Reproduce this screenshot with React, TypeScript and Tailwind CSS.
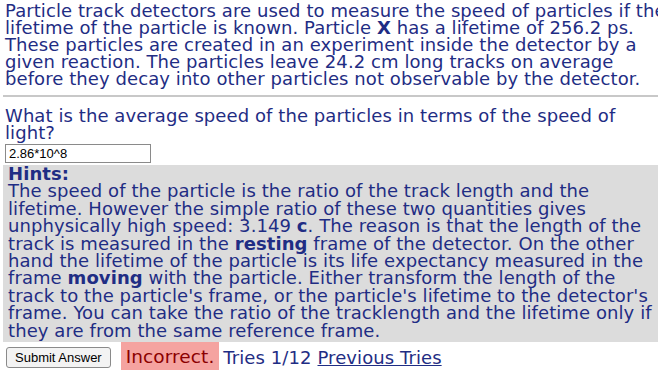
import React from "react";

export default function App() {
  const font = { fontFamily: '"DejaVu Sans", Verdana, sans-serif' };
  return (
    <div className="w-[658px] h-[370px] overflow-hidden bg-white text-[#1f2d84] tracking-[0.08px]" style={font}>
      <div className="w-[672px] pl-[3px]">
        <p className="text-[18px] leading-[17px] pl-[2px] pt-[2px]">
          Particle track detectors are used to measure the speed of particles if the lifetime of the particle is known. Particle <b>X</b> has a lifetime of 256.2 ps. These particles are created in an experiment inside the detector by a given reaction. The particles leave 24.2 cm long tracks on average before they decay into other particles not observable by the detector.
        </p>
        <hr className="mt-[8px] mb-[10px] border-t-2 border-[#c8c8c8]" />
        <p className="w-[640px] text-[18px] leading-[17px] pl-[2px]">
          What is the average speed of the particles in terms of the speed of light?
        </p>
        <div className="pl-[2px]">
          <input
            readOnly
            value="2.86*10^8"
            className="w-[146px] h-[19px] border border-[#8a8a8a] px-[3px] text-[13px] text-black outline-none tracking-normal"
            style={{ fontFamily: '"Liberation Sans", Arial, sans-serif' }}
          />
        </div>
        <div className="bg-[#dcdcdc] pl-[5px] pr-[16px] pb-[3px] text-[18px] leading-[17.4px]">
          <div className="font-bold">Hints:</div>
          <div>
            The speed of the particle is the ratio of the track length and the lifetime. However the simple ratio of these two quantities gives unphysically high speed: 3.149 <b>c</b>. The reason is that the length of the track is measured in the <b>resting</b> frame of the detector. On the other hand the lifetime of the particle is its life expectancy measured in the frame <b>moving</b> with the particle. Either transform the length of the track to the particle's frame, or the particle's lifetime to the detector's frame. You can take the ratio of the tracklength and the lifetime only if they are from the same reference frame.
          </div>
        </div>
        <div className="flex items-center pl-[3px]">
          <button
            className="h-[21px] px-[8px] border border-[#8a8a8a] rounded-[3px] bg-[#f3f3f3] text-[13px] text-black tracking-normal"
            style={{ fontFamily: '"Liberation Sans", Arial, sans-serif' }}
          >
            Submit Answer
          </button>
          <span className="ml-[10px] bg-[#f5a3a0] text-[#8b0000] text-[18.5px] leading-[30px] px-[5px]">Incorrect.</span>
          <span className="ml-[4px] text-[18px]">Tries 1/12</span>
          <a className="ml-[6px] text-[18px] underline">Previous Tries</a>
        </div>
      </div>
    </div>
  );
}
